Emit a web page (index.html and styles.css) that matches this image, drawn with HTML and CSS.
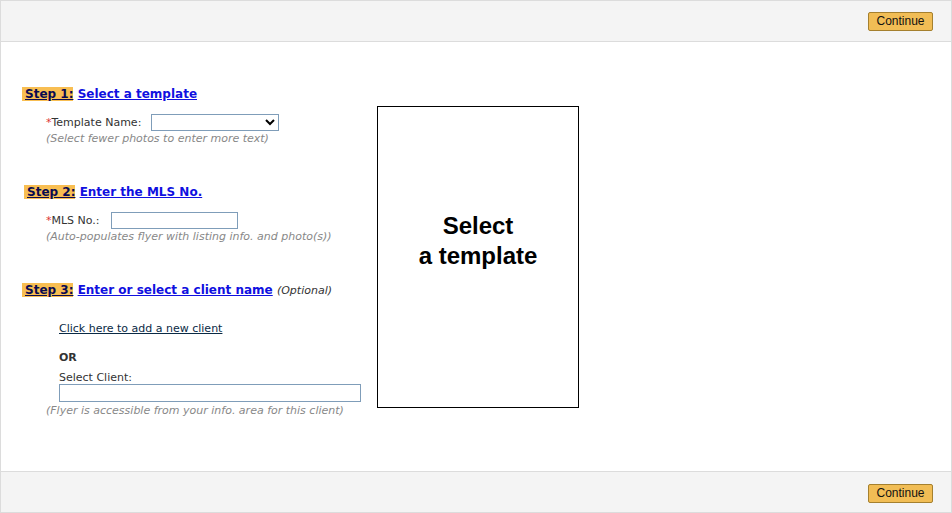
FILE: index.html
```html
<!DOCTYPE html>
<html>
<head>
<meta charset="utf-8">
<link rel="stylesheet" href="styles.css">
</head>
<body>
<div class="page">
  <div class="bar bar-top"><button class="btn">Continue</button></div>
  <div class="main">
    <div class="steps">
      <div class="step">
        <h2 class="step-title"><span class="step-num">Step 1:</span> <a href="#" class="step-link">Select a template</a></h2>
        <div class="field">
          <label class="lbl"><span class="req">*</span>Template Name:</label>
          <select class="sel"><option></option></select>
        </div>
        <div class="hint">(Select fewer photos to enter more text)</div>
      </div>
      <div class="step step2">
        <h2 class="step-title"><span class="step-num">Step 2:</span> <a href="#" class="step-link">Enter the MLS No.</a></h2>
        <div class="field">
          <label class="lbl lbl-mls"><span class="req">*</span>MLS No.:</label>
          <input class="txt mls" type="text">
        </div>
        <div class="hint">(Auto-populates flyer with listing info. and photo(s))</div>
      </div>
      <div class="step step3">
        <h2 class="step-title"><span class="step-num">Step 3:</span> <a href="#" class="step-link">Enter or select a client name</a> <span class="opt">(Optional)</span></h2>
        <div class="client">
          <a href="#" class="add-link">Click here to add a new client</a>
          <div class="or">OR</div>
          <div class="sel-lbl">Select Client:</div>
          <input class="txt client-input" type="text">
        </div>
        <div class="hint hint-client">(Flyer is accessible from your info. area for this client)</div>
      </div>
    </div>
    <div class="preview">
      <div class="preview-text">Select<br>a template</div>
    </div>
  </div>
  <div class="bar bar-bottom"><button class="btn">Continue</button></div>
</div>
</body>
</html>
```

FILE: styles.css
```css
html, body {
  margin: 0;
  padding: 0;
  background: #fff;
}
body {
  font-family: "DejaVu Sans", Verdana, sans-serif;
  font-size: 11px;
  color: #333;
}
.page {
  box-sizing: border-box;
  width: 952px;
  height: 513px;
  border: 1px solid #dcdcdc;
  display: flex;
  flex-direction: column;
}
.bar {
  background: #f4f4f4;
  height: 40px;
  display: flex;
  justify-content: flex-end;
  align-items: center;
  padding-right: 18px;
  box-sizing: border-box;
}
.bar-top {
  border-bottom: 1px solid #dcdcdc;
  height: 41px;
  padding-top: 1px;
}
.bar-bottom {
  border-top: 1px solid #dcdcdc;
  height: 41px;
  padding-top: 3px;
}
.btn {
  font-family: "Liberation Sans", Tahoma, sans-serif;
  font-size: 12px;
  color: #111;
  background: #f1bd55;
  border: 1px solid #a5802e;
  border-radius: 2px;
  height: 19px;
  width: 65px;
  padding: 0;
  line-height: 17px;
}
.main {
  flex: 1;
  display: flex;
  align-items: flex-start;
  padding-left: 21px;
}
.steps {
  width: 355px;
  padding-top: 44px;
}
.step-title {
  margin: 0;
  font-size: 12px;
  font-weight: bold;
  line-height: 16px;
  white-space: nowrap;
}
.step-num {
  background: #f8be52;
  color: #0a0a50;
  text-decoration: underline;
  padding: 0 0 0 3px;
}
.step-link {
  color: #1010e0;
  text-decoration: underline;
}
.opt {
  font-weight: normal;
  font-style: italic;
  font-size: 11px;
  color: #333;
}
.field {
  display: flex;
  align-items: center;
  margin-top: 12px;
  padding-left: 24px;
  height: 17px;
}
.lbl {
  margin-right: 10px;
}
.lbl-mls {
  margin-right: 11px;
}
.req {
  color: #d33;
}
.sel {
  width: 128px;
  height: 17px;
  border: 1px solid #7f9db9;
  background: #fff;
  font-size: 11px;
  padding: 0;
  border-radius: 0;
}
.txt {
  box-sizing: border-box;
  border: 1px solid #7f9db9;
  height: 17px;
  padding: 0 2px;
  margin: 0;
}
.mls {
  width: 127px;
}
.hint {
  font-style: italic;
  color: #888;
  padding-left: 24px;
  line-height: 14px;
  margin-top: 1px;
}
.hint-client {
  margin-top: 2px;
}
.step2 {
  margin-top: 38px;
}
.step2 .step-title {
  padding-left: 2px;
}
.step3 {
  margin-top: 38px;
}
.client {
  padding-left: 37px;
  margin-top: 23px;
}
.add-link {
  color: #0a2a45;
  text-decoration: underline;
  display: block;
  line-height: 14px;
}
.or {
  font-weight: bold;
  margin-top: 15px;
  line-height: 14px;
}
.sel-lbl {
  margin-top: 7px;
  line-height: 12px;
}
.client-input {
  display: block;
  width: 302px;
  height: 18px;
  margin-top: 0;
}
.preview {
  box-sizing: border-box;
  width: 202px;
  height: 302px;
  border: 1px solid #000;
  margin-top: 64px;
  display: flex;
  flex-direction: column;
  align-items: center;
  padding-top: 104px;
}
.preview-text {
  font-family: "Liberation Sans", Arial, sans-serif;
  font-weight: bold;
  font-size: 24px;
  line-height: 30px;
  color: #000;
  text-align: center;
}
```
